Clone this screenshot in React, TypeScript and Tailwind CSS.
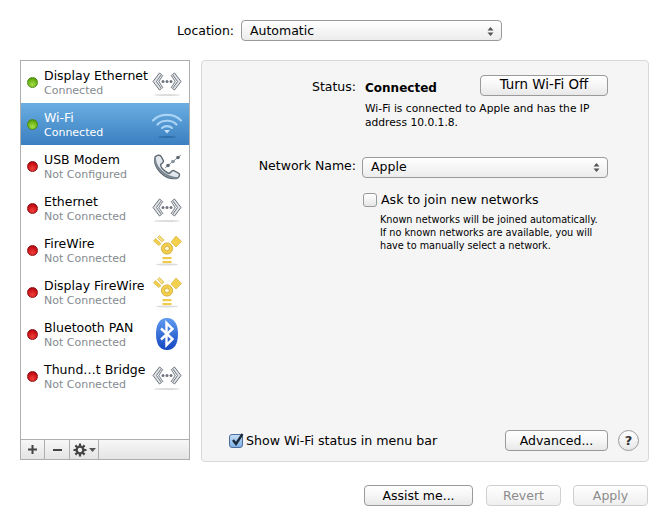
const font = "font-['DejaVu_Sans',sans-serif]";

function Ethernet() {
  return (
    <svg width="32" height="32" viewBox="0 0 32 32" fill="none">
      <path d="M8.5 7 L2 15.5 L8.5 24 L10.5 22.5 L5.5 15.5 L10.5 8.5 Z" fill="#dfe3e8" stroke="#6f757d" strokeWidth="1" />
      <path d="M12 9 L7.8 15.5 L12 22" stroke="#8f959c" strokeWidth="1.2" />
      <path d="M23.5 7 L30 15.5 L23.5 24 L21.5 22.5 L26.5 15.5 L21.5 8.5 Z" fill="#dfe3e8" stroke="#6f757d" strokeWidth="1" />
      <path d="M20 9 L24.2 15.5 L20 22" stroke="#8f959c" strokeWidth="1.2" />
      <circle cx="12" cy="15.5" r="1.5" fill="#6f757d" />
      <circle cx="16" cy="15.5" r="1.5" fill="#6f757d" />
      <circle cx="20" cy="15.5" r="1.5" fill="#6f757d" />
      <ellipse cx="16" cy="29" rx="13" ry="1.1" fill="#dcdcdc" />
    </svg>
  );
}

function Wifi() {
  return (
    <svg width="32" height="32" viewBox="0 0 32 32" fill="none">
      <path d="M2 12.5 C9 5 23 5 30 12.5" stroke="#a9d3f5" strokeWidth="2.2" strokeLinecap="round" />
      <path d="M6.5 16.5 C11 11.5 21 11.5 25.5 16.5" stroke="#a9d3f5" strokeWidth="2.2" strokeLinecap="round" />
      <path d="M11 20 C13.5 17.5 18.5 17.5 21 20" stroke="#a9d3f5" strokeWidth="2.2" strokeLinecap="round" />
      <path d="M13 22 L19 22 L16 25.5 Z" fill="#c4e2fa" />
      <ellipse cx="16" cy="29" rx="9" ry="1.1" fill="#2f6fae" />
    </svg>
  );
}

function Phone() {
  return (
    <svg width="32" height="32" viewBox="0 0 32 32" fill="none">
      <path d="M4 7 C6.5 4.5 9.5 5 10.5 7 L12.5 11 C12.5 13 10 13.2 9.5 15 C10 18 14 22 18 23.5 C20 23 20 20.5 22.5 20.5 L28 23.5 C29.5 25.5 27.5 28 25 28.5 C14 30 1.5 18 4 7 Z" fill="#e2e8ee" stroke="#5f6870" strokeWidth="1.4" />
      <path d="M4 8 C3.5 17 14 27.5 26 28.2" stroke="#7a8690" strokeWidth="2" />
      <path d="M14 18 L30 5" stroke="#8a9299" strokeWidth="1" />
      <circle cx="17" cy="15.5" r="1.8" fill="#5f6870" />
      <circle cx="22" cy="11.5" r="1.8" fill="#8a9299" />
      <circle cx="27" cy="7.5" r="1.8" fill="#5f6870" />
    </svg>
  );
}

function FireWire() {
  return (
    <svg width="32" height="32" viewBox="0 0 32 32" fill="none">
      <path d="M25 2 L30.5 7.5 L25 13 L20 8 Z" fill="#f3d04e" stroke="#d3a92a" strokeWidth="0.6" />
      <path d="M2.5 7 L4.5 4.5 L10 9.5 L8 11.5 Z" fill="#f3d04e" stroke="#d3a92a" strokeWidth="0.6" />
      <path d="M6.5 3.5 L8.5 1.5 L13 6 L11 8 Z" fill="#f6df85" stroke="#d3a92a" strokeWidth="0.6" />
      <circle cx="16" cy="14.5" r="5.6" fill="#f3d04e" stroke="#cda22a" strokeWidth="0.8" />
      <circle cx="16" cy="14.5" r="2.4" fill="#fdf6d4" stroke="#cda22a" strokeWidth="0.8" />
      <rect x="11.5" y="23" width="9" height="2.2" fill="#f0cb4a" />
      <rect x="11.5" y="27" width="9" height="2.2" fill="#f0cb4a" />
      <ellipse cx="16" cy="30.5" rx="11" ry="1" fill="#dddddd" />
    </svg>
  );
}

function Bluetooth() {
  return (
    <svg width="32" height="32" viewBox="0 0 32 32" fill="none">
      <defs>
        <linearGradient id="bt" x1="0" y1="0" x2="0" y2="1">
          <stop offset="0" stopColor="#5f9bf0" />
          <stop offset="1" stopColor="#1546c0" />
        </linearGradient>
      </defs>
      <path d="M16 0 C24 0 27 7 27 16 C27 25 24 32 16 32 C8 32 5 25 5 16 C5 7 8 0 16 0 Z" fill="url(#bt)" />
      <path d="M10 10.5 L21.5 21 L15.5 27 L15.5 5 L21.5 11 L10 21.5" stroke="#ffffff" strokeWidth="2.4" />
    </svg>
  );
}

type Row = {
  name: string;
  status: string;
  on?: boolean;
  selected?: boolean;
  icon: React.ReactNode;
};

const rows: Row[] = [
  { name: "Display Ethernet", status: "Connected", on: true, icon: <Ethernet /> },
  { name: "Wi-Fi", status: "Connected", on: true, selected: true, icon: <Wifi /> },
  { name: "USB Modem", status: "Not Configured", icon: <Phone /> },
  { name: "Ethernet", status: "Not Connected", icon: <Ethernet /> },
  { name: "FireWire", status: "Not Connected", icon: <FireWire /> },
  { name: "Display FireWire", status: "Not Connected", icon: <FireWire /> },
  { name: "Bluetooth PAN", status: "Not Connected", icon: <Bluetooth /> },
  { name: "Thund…t Bridge", status: "Not Connected", icon: <Ethernet /> },
];

function ServiceRow({ row }: { row: Row }) {
  return (
    <div
      className={
        row.selected
          ? "flex h-[42px] items-center px-[6px] bg-gradient-to-b from-[#6aaee2] to-[#3a7fc0] text-white"
          : "flex h-[42px] items-center px-[6px] text-black"
      }
    >
      <span
        className={
          row.on
            ? "h-[11px] w-[11px] shrink-0 rounded-full border border-[#4f8a14] bg-[radial-gradient(circle_at_50%_75%,#a6e04a,#66b012_65%,#3f7f0c)]"
            : "h-[11px] w-[11px] shrink-0 rounded-full border border-[#8f1014] bg-[radial-gradient(circle_at_50%_75%,#f0403a,#c90f16_65%,#8f0c10)]"
        }
      />
      <div className="ml-[6px] flex min-w-0 flex-1 flex-col pt-[2px]">
        <span className="whitespace-nowrap text-[12.5px] leading-[15px]">{row.name}</span>
        <span
          className={
            row.selected
              ? "whitespace-nowrap text-[11px] leading-[15px] text-white"
              : "whitespace-nowrap text-[11px] leading-[15px] text-[#858b90]"
          }
        >
          {row.status}
        </span>
      </div>
      <div className="flex w-[32px] shrink-0 justify-center">{row.icon}</div>
    </div>
  );
}

function Updown({ color = "#555" }: { color?: string }) {
  return (
    <svg width="7" height="11" viewBox="0 0 7 11" fill={color}>
      <path d="M3.5 1 L6.5 4.5 L0.5 4.5 Z" />
      <path d="M3.5 10 L6.5 6.5 L0.5 6.5 Z" />
    </svg>
  );
}

const btn =
  "flex h-[21px] items-center justify-center rounded-[4px] border border-[#9a9a9a] bg-gradient-to-b from-white via-[#f6f6f6] to-[#e8e8e8] text-[12.5px] text-black whitespace-nowrap";
const btnOff =
  "flex h-[21px] items-center justify-center rounded-[4px] border border-[#cfcfcf] bg-gradient-to-b from-white to-[#efefef] pt-[2px] text-[12.5px] text-[#8c8c8c] whitespace-nowrap";
const select =
  "flex h-[21px] items-center justify-between rounded-[4px] border border-[#9a9a9a] bg-gradient-to-b from-white to-[#ececec] pl-[8px] pr-[7px] text-[12.5px] text-black";

export default function App() {
  return (
    <div className={`${font} flex h-[525px] w-[668px] flex-col bg-white`}>
      <div className="flex h-[60px] items-start pl-[177px] pt-[20px]">
        <span className="flex h-[21px] w-[64px] items-center pt-[2px] text-[12.5px] text-black">Location:</span>
        <div className={`${select} w-[261px] pt-[1px]`}>
          <span className="pt-[1px]">Automatic</span>
          <Updown />
        </div>
      </div>

      <div className="flex items-start pl-[20px]">
        <div className="flex h-[400px] w-[170px] flex-col border border-[#aeaeae] bg-white">
          <div className="flex-1">
            {rows.map((row) => (
              <ServiceRow key={row.name} row={row} />
            ))}
          </div>
          <div className="flex h-[20px] border-t border-[#aeaeae] bg-gradient-to-b from-[#f7f7f7] to-[#e4e4e4]">
            <div className="flex w-[24px] items-center justify-center border-r border-[#aeaeae]">
              <svg width="9" height="9" viewBox="0 0 9 9" fill="#444">
                <path d="M3.5 0 H5.5 V3.5 H9 V5.5 H5.5 V9 H3.5 V5.5 H0 V3.5 H3.5 Z" />
              </svg>
            </div>
            <div className="flex w-[25px] items-center justify-center border-r border-[#aeaeae]">
              <svg width="9" height="2" viewBox="0 0 9 2" fill="#444">
                <rect width="9" height="2" />
              </svg>
            </div>
            <div className="flex w-[29px] items-center justify-center gap-[2px] border-r border-[#aeaeae]">
              <svg width="14" height="14" viewBox="0 0 14 14" fill="none">
                <circle cx="7" cy="7" r="3.4" stroke="#444" strokeWidth="2.4" />
                <path d="M7 0.5 V3 M7 11 V13.5 M0.5 7 H3 M11 7 H13.5 M2.4 2.4 L4.2 4.2 M9.8 9.8 L11.6 11.6 M2.4 11.6 L4.2 9.8 M9.8 4.2 L11.6 2.4" stroke="#444" strokeWidth="2.2" />
              </svg>
              <svg width="7" height="4" viewBox="0 0 7 4" fill="#555">
                <path d="M0 0 H7 L3.5 4 Z" />
              </svg>
            </div>
          </div>
        </div>

        <div className="ml-[11px] flex h-[402px] w-[448px] flex-col rounded-[4px] border border-[#d8d8d8] bg-[#f5f5f5] pb-[10px] pt-[14px]">
          <div className="flex">
            <span className="flex h-[21px] w-[154px] items-center justify-end pt-[4px] text-[12.5px] text-black">Status:</span>
            <div className="ml-[9px] flex w-[243px] flex-col">
              <div className="flex items-start justify-between">
                <span className="pt-[4px] text-[12px] font-bold text-black">Connected</span>
                <div className={`${btn} w-[128px] text-[13.4px]`}>Turn Wi-Fi Off</div>
              </div>
              <p className="mt-[5px] whitespace-nowrap text-[10.7px] leading-[14px] text-black">
                Wi-Fi is connected to Apple and has the IP
                <br />
                address 10.0.1.8.
              </p>
            </div>
          </div>

          <div className="mt-[27px] flex">
            <span className="flex h-[21px] w-[154px] items-center justify-end pb-[2px] text-[12.5px] text-black">Network Name:</span>
            <div className={`${select} ml-[6px] w-[246px]`}>
              <span>Apple</span>
              <Updown />
            </div>
          </div>

          <div className="ml-[161px] mt-[14px] flex items-center">
            <span className="h-[14px] w-[14px] rounded-[3px] border border-[#9a9a9a] bg-gradient-to-b from-white to-[#e6e6e6]" />
            <span className="ml-[4px] text-[12.6px] leading-[16px] text-black">Ask to join new networks</span>
          </div>
          <p className="ml-[178px] mt-[5px] whitespace-nowrap text-[9.7px] leading-[13px] text-black">
            Known networks will be joined automatically.
            <br />
            If no known networks are available, you will
            <br />
            have to manually select a network.
          </p>

          <div className="mt-auto flex items-center pl-[27px]">
            <span className="relative h-[14px] w-[14px] rounded-[3px] border border-[#4a6f9c] bg-gradient-to-b from-[#c5dcf5] to-[#7fb0e6]">
              <svg className="absolute -top-[3px] left-0" width="15" height="16" viewBox="0 0 15 16" fill="none">
                <path d="M3 8 L6 12 L12.5 2" stroke="#1c2a3c" strokeWidth="2.4" />
              </svg>
            </span>
            <span className="ml-[3px] pt-[2px] text-[12.6px] text-black">Show Wi-Fi status in menu bar</span>
            <div className={`${btn} ml-auto w-[103px] pt-[2px]`}>Advanced...</div>
            <div className="ml-[10px] mr-[9px] flex h-[21px] w-[21px] items-center justify-center rounded-full border border-[#9a9a9a] bg-gradient-to-b from-white to-[#e8e8e8] text-[13px] font-bold text-[#333]">
              ?
            </div>
          </div>
        </div>
      </div>

      <div className="mt-[23px] flex justify-end pr-[20px]">
        <div className={`${btn} w-[109px] pt-[2px]`}>Assist me...</div>
        <div className={`${btnOff} ml-[13px] w-[75px]`}>Revert</div>
        <div className={`${btnOff} ml-[12px] w-[75px]`}>Apply</div>
      </div>
    </div>
  );
}
